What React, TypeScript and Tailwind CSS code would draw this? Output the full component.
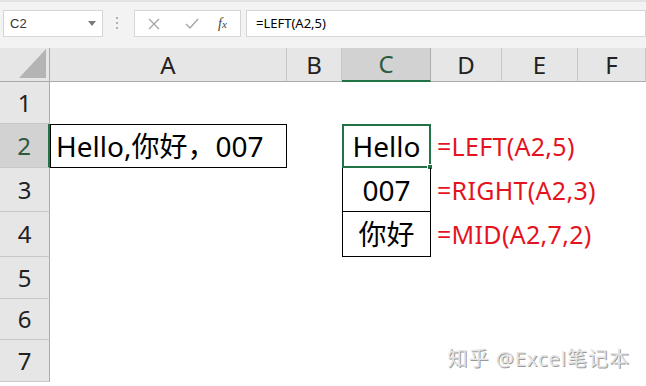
import React from "react";

const cols = [
  { key: "A", w: 237 },
  { key: "B", w: 55 },
  { key: "C", w: 89 },
  { key: "D", w: 71 },
  { key: "E", w: 76 },
  { key: "F", w: 68 },
];

const rowHeights = [42, 44, 44, 45, 42, 41, 42];

const sans = "font-['Noto_Sans','Noto_Sans_CJK_SC',sans-serif]";

function Formula({ text }: { text: string }) {
  return (
    <span className={`whitespace-nowrap pl-[6px] text-[25px] leading-none tracking-[0.3px] text-[#e3141f] ${sans}`}>
      {text}
    </span>
  );
}

function Cell({ r, c }: { r: number; c: string }) {
  if (r === 2 && c === "A") {
    return (
      <div className="flex h-full items-center border border-black pl-[5px]">
        <span className={`whitespace-nowrap text-[28px] leading-none text-black ${sans}`}>
          Hello,你好，007
        </span>
      </div>
    );
  }
  if (c === "C" && r >= 2 && r <= 4) {
    const txt = r === 2 ? "Hello" : r === 3 ? "007" : "你好";
    const box =
      r === 2 ? "border-2 border-[#217346]" : "border border-t-0 border-black";
    return (
      <div className={`relative flex h-full items-center justify-center ${box}`}>
        <span className={`text-[28px] leading-none text-black ${sans}`}>{txt}</span>
        {r === 2 && (
          <div className="absolute -bottom-[4px] -right-[4px] h-[6px] w-[6px] border border-white bg-[#217346]" />
        )}
      </div>
    );
  }
  if (c === "D" && r >= 2 && r <= 4) {
    const f = r === 2 ? "=LEFT(A2,5)" : r === 3 ? "=RIGHT(A2,3)" : "=MID(A2,7,2)";
    return (
      <div className="flex h-full items-center overflow-visible">
        <Formula text={f} />
      </div>
    );
  }
  return null;
}

export default function App() {
  return (
    <div className="relative h-[386px] w-[646px] overflow-hidden bg-white">
      {/* formula bar */}
      <div className="flex h-[48px] items-start border-t-[2px] border-[#e2e2e2] bg-[#f3f3f3] pt-[8px]">
        <div className="ml-[3px] flex h-[27px] w-[100px] items-center justify-between border border-[#d6d6d6] bg-white pl-[6px] pr-[6px]">
          <span className="font-['Liberation_Sans',sans-serif] text-[13px] text-[#333]">C2</span>
          <svg width="8" height="5" viewBox="0 0 8 5">
            <path d="M0 0h8L4 5z" fill="#7a7a7a" />
          </svg>
        </div>
        <div className="ml-[13px] mr-[16px] mt-[7px] flex flex-col gap-[3px]">
          <div className="h-[2px] w-[2px] bg-[#b0b0b0]" />
          <div className="h-[2px] w-[2px] bg-[#b0b0b0]" />
          <div className="h-[2px] w-[2px] bg-[#b0b0b0]" />
        </div>
        <div className="flex h-[27px] w-[107px] items-center border border-[#d6d6d6] bg-white pl-[12px]">
          <svg width="12" height="12" viewBox="0 0 12 12" className="ml-[1px]">
            <path d="M1 1l10 10M11 1L1 11" stroke="#a6a6a6" strokeWidth="1.3" />
          </svg>
          <svg width="14" height="12" viewBox="0 0 14 12" className="ml-[25px]">
            <path d="M1 6l4 4 8-9" stroke="#a6a6a6" strokeWidth="1.4" fill="none" />
          </svg>
          <span className="ml-[19px] font-['Liberation_Serif',serif] text-[14px] italic text-[#444]">
            f<span className="text-[11px]">x</span>
          </span>
        </div>
        <div className="ml-[5px] flex h-[27px] flex-1 items-center border border-[#d6d6d6] bg-white pl-[9px]">
          <span className={`text-[13px] text-black ${sans}`}>=LEFT(A2,5)</span>
        </div>
      </div>

      {/* column header */}
      <div className="flex h-[34px] bg-[#e6e6e6]">
        <div className="relative w-[50px] border-r border-b border-[#ababab]">
          <svg className="absolute bottom-[3px] right-[3px]" width="27" height="29" viewBox="0 0 27 29">
            <path d="M27 0V29H0z" fill="#b4b4b4" />
          </svg>
        </div>
        {cols.map((c) => (
          <div
            key={c.key}
            style={{ width: c.w }}
            className={`flex items-center justify-center border-r text-[24px] ${sans} ${
              c.key === "C"
                ? "border-r-[#ababab] border-b-2 border-b-[#217346] bg-[#d2d2d2] text-[#2d5a3e]"
                : "border-r-[#c8c8c8] border-b border-b-[#ababab] text-[#222]"
            }`}
          >
            {c.key}
          </div>
        ))}
      </div>

      {/* rows */}
      {rowHeights.map((h, i) => {
        const r = i + 1;
        return (
          <div key={r} className="flex" style={{ height: h }}>
            <div
              className={`flex w-[50px] items-center justify-center border-b border-b-[#c8c8c8] text-[24px] ${sans} ${
                r === 2
                  ? "border-r-2 border-r-[#217346] bg-[#d2d2d2] text-[#2d5a3e]"
                  : "border-r border-r-[#ababab] bg-[#e6e6e6] text-[#222]"
              }`}
            >
              {r}
            </div>
            {cols.map((c) => (
              <div key={c.key} style={{ width: c.w }} className="h-full shrink-0">
                <Cell r={r} c={c.key} />
              </div>
            ))}
          </div>
        );
      })}

      {/* watermark */}
      <div
        className={`absolute bottom-[17px] right-[16px] whitespace-nowrap text-[20px] leading-none tracking-[1px] text-[#e4e4e4] [text-shadow:1px_1px_0_#9a9a9a] ${sans}`}
      >
        知乎 @Excel笔记本
      </div>
    </div>
  );
}
